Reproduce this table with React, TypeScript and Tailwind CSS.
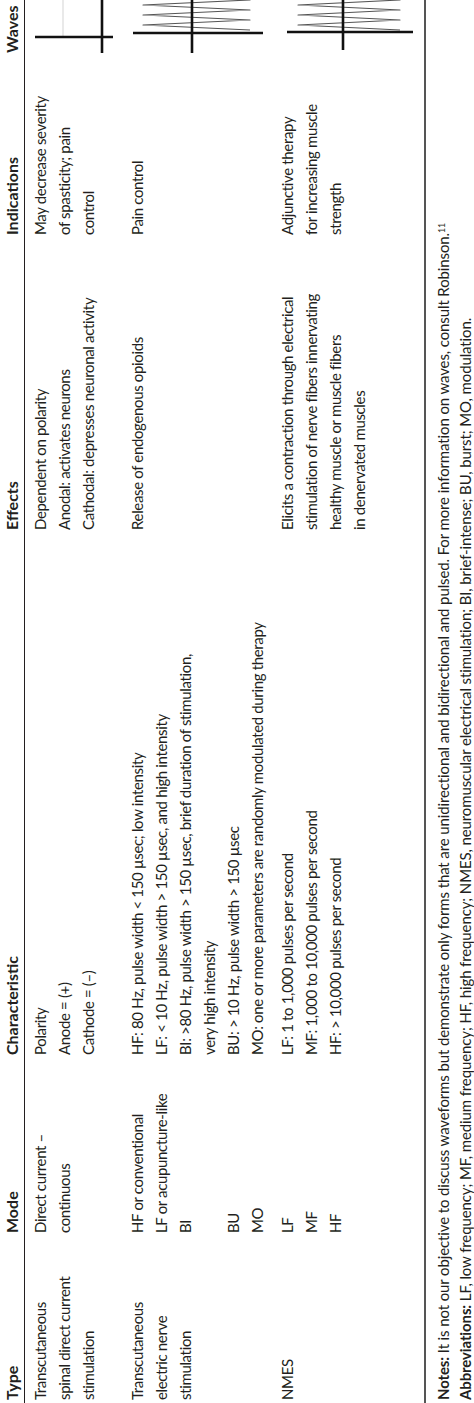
import React from "react";

type Row = {
  type: string[];
  mode: string[];
  characteristic: string[];
  effects: string[];
  indications: string[];
  wave: "dc" | "tens" | "nmes";
  height: string;
  pad: string;
};

const rows: Row[] = [
  {
    type: ["Transcutaneous", "spinal direct current", "stimulation"],
    mode: ["Direct current –", "continuous"],
    characteristic: ["Polarity", "Anode = (+)", "Cathode = (–)"],
    effects: [
      "Dependent on polarity",
      "Anodal: activates neurons",
      "Cathodal: depresses neuronal activity",
    ],
    indications: ["May decrease severity", "of spasticity; pain", "control"],
    wave: "dc",
    height: "h-[100px]",
    pad: "pt-[3px]",
  },
  {
    type: ["Transcutaneous", "electric nerve", "stimulation"],
    mode: ["HF or conventional", "LF or acupuncture-like", "BI", "\u00a0", "BU", "MO"],
    characteristic: [
      "HF: 80 Hz, pulse width < 150 µsec; low intensity",
      "LF: < 10 Hz, pulse width > 150 µsec, and high intensity",
      "BI: >80 Hz, pulse width > 150 µsec, brief duration of stimulation,",
      "very high intensity",
      "BU: > 10 Hz, pulse width > 150 µsec",
      "MO: one or more parameters are randomly modulated during therapy",
    ],
    effects: ["Release of endogenous opioids"],
    indications: ["Pain control"],
    wave: "tens",
    height: "h-[150px]",
    pad: "pt-0",
  },
  {
    type: ["NMES"],
    mode: ["LF", "MF", "HF"],
    characteristic: [
      "LF: 1 to 1,000 pulses per second",
      "MF: 1,000 to 10,000 pulses per second",
      "HF: > 10,000 pulses per second",
    ],
    effects: [
      "Elicits a contraction through electrical",
      "stimulation of nerve fibers innervating",
      "healthy muscle or muscle fibers",
      "in denervated muscles",
    ],
    indications: ["Adjunctive therapy", "for increasing muscle", "strength"],
    wave: "nmes",
    height: "h-[149px]",
    pad: "pt-0",
  },
];

const cols = "grid grid-cols-[167px_178px_525px_295px_182px_1fr]";

function Lines({ lines }: { lines: string[] }) {
  return (
    <div className="flex flex-col tracking-[-0.35px]">
      {lines.map((l, i) => (
        <div key={i} className="whitespace-nowrap">
          {l}
        </div>
      ))}
    </div>
  );
}

function zigzag(x0: number, top: number, bottom: number) {
  const pts: string[] = [];
  for (let i = 0; i < 10; i++) {
    pts.push(`${x0 + i * 5},${i % 2 === 0 ? bottom : top}`);
  }
  return "M" + pts.join(" L");
}

function Wave({ kind }: { kind: Row["wave"] }) {
  if (kind === "dc") {
    return (
      <svg width="60" height="78" className="mt-[7px] overflow-visible">
        <line x1="16" y1="28" x2="60" y2="28" stroke="#c8c8c8" strokeWidth="0.8" />
        <line x1="16" y1="0" x2="16" y2="78" stroke="#111" strokeWidth="2.6" />
        <line x1="0" y1="67" x2="60" y2="67" stroke="#111" strokeWidth="2.6" />
      </svg>
    );
  }
  const tens = kind === "tens";
  const h = tens ? 130 : 126;
  const ax = tens ? 20 : 21;
  const ty = tens ? 59 : 56;
  const zTop = tens ? 10 : 11;
  const zBot = tens ? 117 : 113;
  return (
    <svg width="60" height={h} className={`${tens ? "mt-[8px]" : "mt-[12px]"} overflow-visible`}>
      <path
        d={zigzag(23, zTop, zBot)}
        fill="none"
        stroke="#555"
        strokeWidth="1.1"
        strokeLinejoin="round"
      />
      <line x1={ax} y1="0" x2={ax} y2={h} stroke="#111" strokeWidth="2.6" />
      <line x1={tens ? 0 : 3} y1={ty} x2="60" y2={ty} stroke="#111" strokeWidth="2.6" />
    </svg>
  );
}

export default function App() {
  return (
    <div className="w-[474px] h-[1403px] overflow-hidden bg-white">
      <div
        className="w-[1403px] h-[474px] origin-top-left translate-y-[1403px] -rotate-90 bg-white text-[#231f20] text-[15px] leading-[24px]"
        style={{ fontFamily: "Lato, 'Open Sans', sans-serif" }}
      >
        <div className={`${cols} pl-[3px] h-[25px] border-b border-[#231f20] font-bold text-[16px] leading-[24px]`}>
          <div>Type</div>
          <div>Mode</div>
          <div>Characteristic</div>
          <div>Effects</div>
          <div>Indications</div>
          <div>Waves</div>
        </div>

        {rows.map((r, i) => (
          <div key={i} className={`${cols} pl-[3px] ${r.height} ${r.pad}`}>
            <Lines lines={r.type} />
            <Lines lines={r.mode} />
            <Lines lines={r.characteristic} />
            <Lines lines={r.effects} />
            <Lines lines={r.indications} />
            <div>
              <Wave kind={r.wave} />
            </div>
          </div>
        ))}

        <div className="border-t-2 border-[#555] pl-[3px] pt-[6px] text-[15px] leading-[22px] tracking-[-0.12px]">
          <p className="whitespace-nowrap">
            <span className="font-bold">Notes:</span> It is not our objective to discuss waveforms but
            demonstrate only forms that are unidirectional and bidirectional and pulsed. For more
            information on waves, consult Robinson.<sup className="text-[9px]">11</sup>
          </p>
          <p className="whitespace-nowrap">
            <span className="font-bold">Abbreviations:</span> LF, low frequency; MF, medium frequency;
            HF, high frequency; NMES, neuromuscular electrical stimulation; BI, brief-intense; BU,
            burst; MO, modulation.
          </p>
        </div>
      </div>
    </div>
  );
}
